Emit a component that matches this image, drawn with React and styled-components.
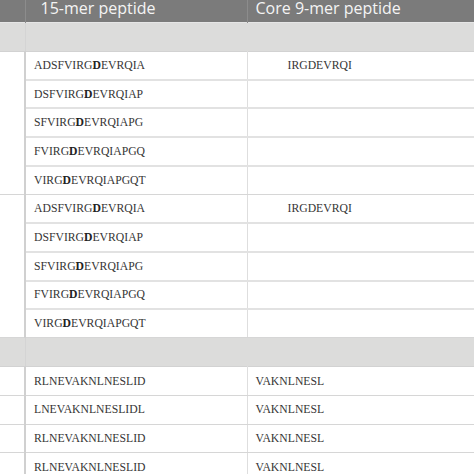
import React from "react";
import styled, { createGlobalStyle } from "styled-components";

const GlobalStyle = createGlobalStyle`
	html, body {
		margin: 0;
		padding: 0;
		background: #fff;
		overflow: hidden;
	}
`;

const Table = styled.table`
	width: 474px;
	border-collapse: collapse;
	table-layout: fixed;
	font-family: "Liberation Serif", "Times New Roman", serif;
`;

const HeadRow = styled.tr`
	height: 22px;
	background-color: #7b7b7b;
	border-bottom: 1px solid #e6e6e6;
`;

const HeadCell = styled.th`
	padding: 0 0 0 ${(p) => p.$pad || 0}px;
	text-align: left;
	vertical-align: top;
	font-family: "Open Sans", "Noto Sans", sans-serif;
	font-weight: 400;
	font-size: 16px;
	line-height: 17px;
	color: #f4f4f4;
	border-left: 1px solid #8c8c8c;
	white-space: nowrap;
	overflow: hidden;

	&:first-child {
		border-left: none;
	}
`;

const BandRow = styled.tr`
	height: 29px;
	background-color: #dcdcdb;
	border-bottom: 1px solid #d2d2d2;
`;

const BandCell = styled.td`
	padding: 0;
	border-left: ${(p) => (p.$line ? "1px solid #d4d4d4" : "none")};
`;

const Row = styled.tr`
	height: 28.7px;
`;

const GroupCell = styled.td`
	padding: 0;
	border-right: 2px solid #d0d0d0;
	border-bottom: 1px solid #d6d6d6;
`;

const Cell = styled.td`
	padding: 0 0 0 ${(p) => p.$pad || 8}px;
	font-size: 11.7px;
	color: #363636;
	border-bottom: ${(p) => (p.$last ? "1px solid #d6d6d6" : "2px solid #e2e2e2")};
	border-left: ${(p) => (p.$divider ? "1px solid #dedede" : "none")};
	white-space: nowrap;
	vertical-align: middle;
`;

const Strong = styled.b`
	font-weight: 700;
	color: #222;
`;

const Peptide = ({ seq }) => {
	const i = seq.indexOf("GD");
	if (i < 0) return seq;
	return (
		<>
			{seq.slice(0, i + 1)}
			<Strong>D</Strong>
			{seq.slice(i + 2)}
		</>
	);
};

const groupRows = [
	["ADSFVIRGDEVRQIA", "IRGDEVRQI"],
	["DSFVIRGDEVRQIAP", ""],
	["SFVIRGDEVRQIAPG", ""],
	["FVIRGDEVRQIAPGQ", ""],
	["VIRGDEVRQIAPGQT", ""],
];

const lastRows = [
	["RLNEVAKNLNESLID", "VAKNLNESL"],
	["LNEVAKNLNESLIDL", "VAKNLNESL"],
	["RLNEVAKNLNESLID", "VAKNLNESL"],
	["RLNEVAKNLNESLID", "VAKNLNESL"],
];

const Group = () =>
	groupRows.map(([a, b], i) => {
		const last = i === groupRows.length - 1;
		return (
			<Row key={i}>
				{i === 0 && <GroupCell rowSpan={groupRows.length} />}
				<Cell $last={last}>
					<Peptide seq={a} />
				</Cell>
				<Cell $last={last} $divider $pad={40}>
					{b}
				</Cell>
			</Row>
		);
	});

const App = () => {
	return (
		<>
			<GlobalStyle />
			<Table>
				<colgroup>
					<col style={{ width: 25 }} />
					<col style={{ width: 222 }} />
					<col />
				</colgroup>
				<thead>
					<HeadRow>
						<HeadCell />
						<HeadCell $pad={15}>15-mer peptide</HeadCell>
						<HeadCell $pad={8}>Core 9-mer peptide</HeadCell>
					</HeadRow>
				</thead>
				<tbody>
					<BandRow>
						<BandCell />
						<BandCell $line />
						<BandCell />
					</BandRow>
					<Group />
					<Group />
					<BandRow>
						<BandCell />
						<BandCell $line />
						<BandCell />
					</BandRow>
					{lastRows.map(([a, b], i) => (
						<Row key={i}>
							<GroupCell />
							<Cell $last>{a}</Cell>
							<Cell $last $divider>
								{b}
							</Cell>
						</Row>
					))}
				</tbody>
			</Table>
		</>
	);
};

export default App;
